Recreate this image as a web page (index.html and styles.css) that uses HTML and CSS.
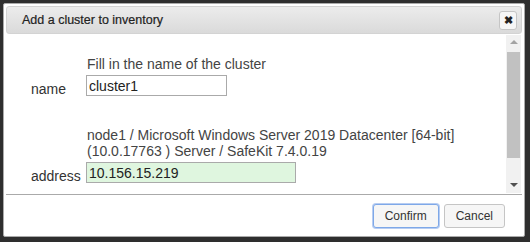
FILE: index.html
```html
<!DOCTYPE html>
<html lang="en">
<head>
  <meta charset="UTF-8">
  <title>Add a cluster to inventory</title>
  <link rel="stylesheet" href="styles.css">
</head>
<body>
  <div class="dialog">
    <div class="titlebar">
      <span class="title">Add a cluster to inventory</span>
      <button class="close" title="Close">&#10006;</button>
    </div>

    <div class="content-wrap">
      <div class="content">
        <div class="field">
          <div class="hint">Fill in the name of the cluster</div>
          <div class="row">
            <label for="name">name</label>
            <input type="text" id="name" class="name-input" value="cluster1">
          </div>
        </div>

        <div class="field">
          <div class="hint">node1 / Microsoft Windows Server 2019 Datacenter [64-bit]<br>(10.0.17763 ) Server / SafeKit 7.4.0.19</div>
          <div class="row">
            <label for="address">address</label>
            <input type="text" id="address" class="addr-input" value="10.156.15.219">
          </div>
        </div>
      </div>

      <div class="scrollbar">
        <div class="arrow up"></div>
        <div class="thumb"></div>
        <div class="arrow down"></div>
      </div>
    </div>

    <div class="buttons">
      <button class="btn focused">Confirm</button>
      <button class="btn">Cancel</button>
    </div>
  </div>
</body>
</html>
```

FILE: styles.css
```css
body {
  margin: 0;
  background: #2e2e2e;
  font-family: "Liberation Sans", Arial, sans-serif;
  color: #333;
  padding: 3px;
}

.dialog {
  width: 522px;
  height: 234px;
  background: #fff;
  border: 1px solid #aaa;
  padding: 2px;
  box-sizing: border-box;
  display: flex;
  flex-direction: column;
  border-radius: 2px;
}

.titlebar {
  display: flex;
  align-items: center;
  justify-content: space-between;
  height: 26px;
  padding: 0 4px 0 15px;
  border: 1px solid #d3d3d3;
  border-radius: 3px;
  background: linear-gradient(#ececec, #dadada);
}

.title {
  font-size: 12.5px;
  color: #222;
  -webkit-text-stroke: 0.2px #222;
}

.close {
  width: 18px;
  height: 19px;
  padding: 0;
  border: 1px solid #c5c5c5;
  border-radius: 3px;
  background: #f6f6f6;
  font-size: 11px;
  line-height: 16px;
  color: #222;
  font-weight: bold;
}

.content-wrap {
  display: flex;
  height: 158px;
  margin-top: 1px;
}

.content {
  flex: 1;
  padding: 21px 0 0 25px;
  font-size: 14px;
}

.field {
  margin-bottom: 31px;
}

.hint {
  margin-left: 56px;
  margin-bottom: 3px;
  line-height: 16px;
  color: #444;
}

.row {
  display: flex;
  align-items: flex-end;
}

.row label {
  width: 55px;
  margin-bottom: -1px;
  color: #333;
}

.row input {
  font-family: "Liberation Sans", Arial, sans-serif;
  font-size: 14px;
  color: #222;
  height: 21px;
  box-sizing: border-box;
  padding: 1px 2px;
  border: 1px solid #aaa;
  margin: 0;
}

.name-input {
  width: 141px;
}

.addr-input {
  width: 210px;
  background: #dff6df;
  border-color: #ddd #eee #eee #999;
}

.scrollbar {
  width: 15px;
  margin-right: 1px;
  display: flex;
  flex-direction: column;
  background: #f1f1f1;
}

.arrow {
  height: 15px;
  position: relative;
}

.arrow::after {
  content: "";
  position: absolute;
  left: 4px;
  top: 5px;
  border-left: 4px solid transparent;
  border-right: 4px solid transparent;
}

.arrow.up::after {
  border-bottom: 4px solid #a3a3a3;
}

.arrow.down::after {
  border-top: 4px solid #505050;
}

.thumb {
  height: 106px;
  margin: 2px 1px 0;
  background: #c1c1c1;
}

.down {
  margin-top: auto;
}

.buttons {
  border-top: 1px solid #aaa;
  margin-top: 1px;
  display: flex;
  justify-content: flex-end;
  gap: 5px;
  padding: 9px 17px 0 0;
}

.btn {
  font-family: "Liberation Sans", Arial, sans-serif;
  font-size: 12px;
  color: #333;
  height: 24px;
  padding: 0 11px;
  border: 1px solid #c5c5c5;
  border-radius: 3px;
  background: #f6f6f6;
}

.btn.focused {
  border-color: #7ea8e8;
  box-shadow: 0 0 0 1px #b7cdf2;
}
```
